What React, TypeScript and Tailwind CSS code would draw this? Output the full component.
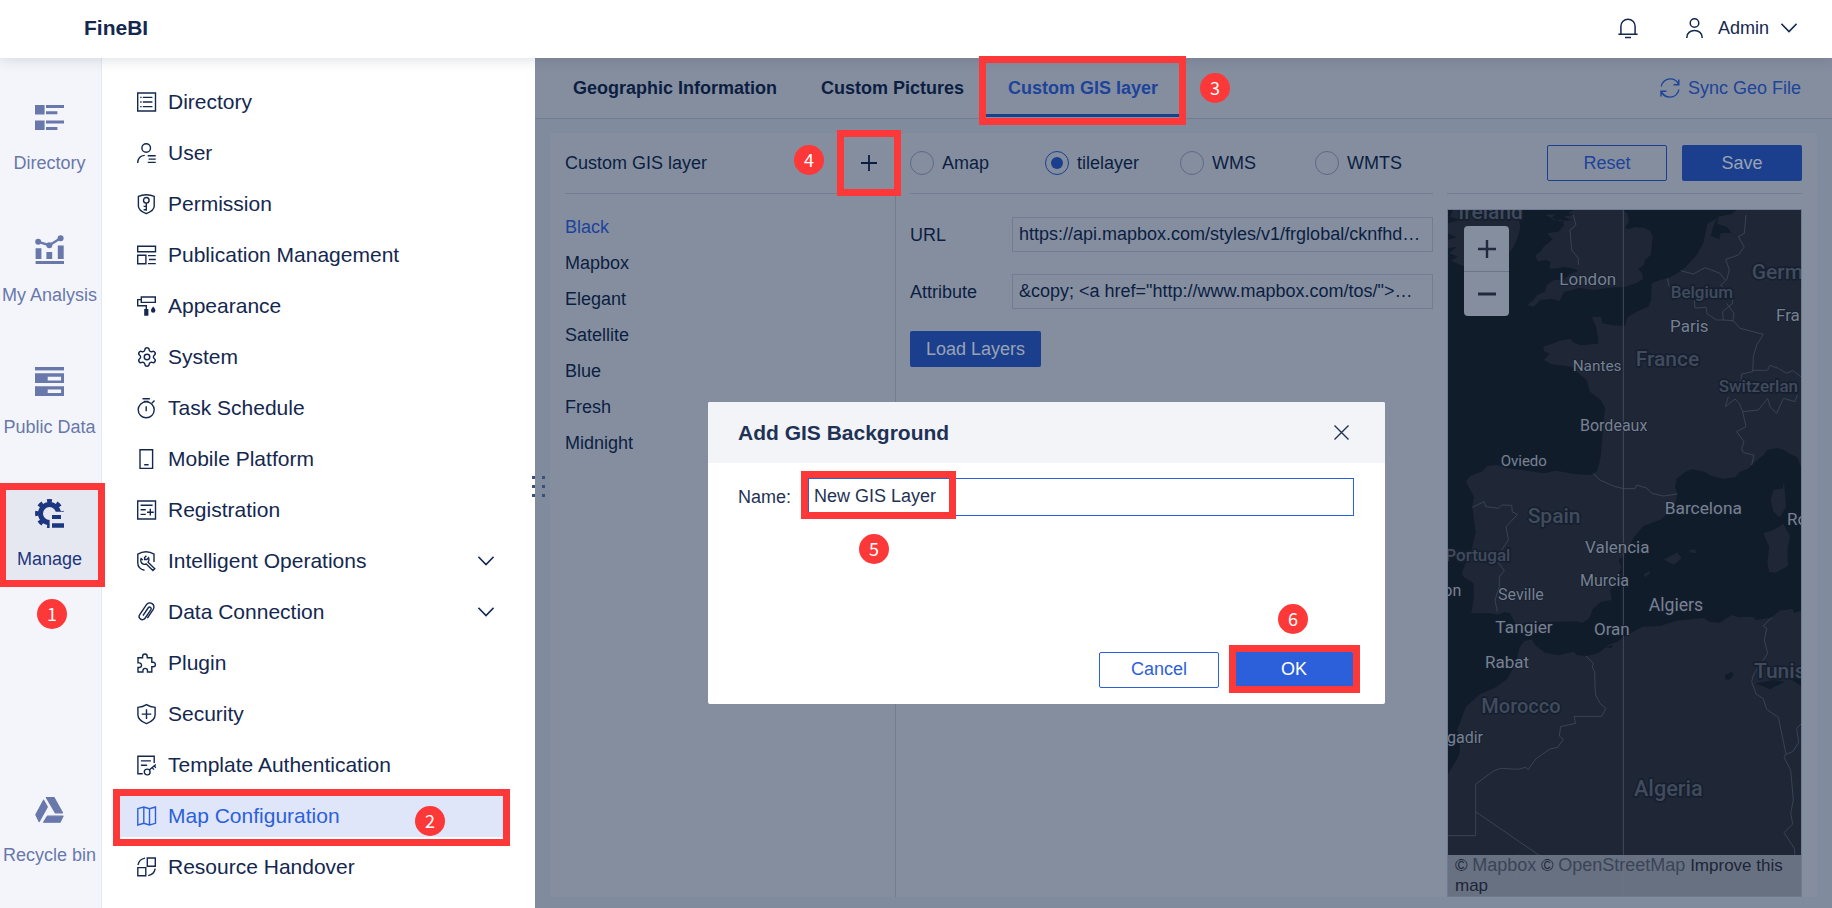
import { useState } from "react";
import type { ReactNode } from "react";
import { Settings } from "lucide-react";
import clsx from "clsx";

type IconProps = { children: ReactNode; className?: string };

const LineIcon = ({ children, className }: IconProps) => (
  <svg
    viewBox="0 0 20 20"
    fill="none"
    stroke="currentColor"
    strokeWidth="1.4"
    className={clsx("h-5 w-5 shrink-0 overflow-visible", className)}
    aria-hidden="true"
  >
    {children}
  </svg>
);

const SolidIcon = ({ children }: IconProps) => (
  <svg viewBox="0 0 30 30" fill="currentColor" className="h-7.5 w-7.5" aria-hidden="true">
    {children}
  </svg>
);

const ChevronDown = () => (
  <svg viewBox="0 0 16 16" className="h-4 w-4" fill="none" stroke="currentColor" strokeWidth="1.6" aria-hidden="true">
    <path d="M.4 3.8 8 11.6l7.6-7.8" />
  </svg>
);

const navItems: { title: string; icon: ReactNode }[] = [
  {
    title: "Directory",
    icon: (
      <SolidIcon>
        <path d="M0 2h9.6v9.4H0zM0 17.6h9.6V27H0zM11 2h18v3H11zM11 8.3h11.4v3H11zM11 17.6h18v3H11zM11 24h11.4v3H11z" />
      </SolidIcon>
    ),
  },
  {
    title: "My Analysis",
    icon: (
      <SolidIcon>
        <path d="M.6 13.3h5.8V24H.6zM11.4 17h5.8v7h-5.8zM22.8 10.6h5.9V24h-5.9zM.6 26H29v3H.6z" />
        <circle cx="3.2" cy="6.8" r="3" />
        <circle cx="14.3" cy="10.2" r="3" />
        <circle cx="25.6" cy="3.2" r="3" />
        <path d="m3.2 6.8 11.1 3.4 11.3-7" fill="none" stroke="currentColor" strokeWidth="2.4" />
      </SolidIcon>
    ),
  },
  {
    title: "Public Data",
    icon: (
      <SolidIcon>
        <path d="M0 0h29v3.4H0z" />
        <path
          fillRule="evenodd"
          d="M0 6.3h29V16H0zM12.7 9.8v3.6h13.4V9.8zM0 19.2h29V29H0zM12.7 22.4V26h13.4v-3.6z"
        />
      </SolidIcon>
    ),
  },
  {
    title: "Manage",
    icon: (
      <SolidIcon>
        <clipPath id="gear-cut">
          <path d="M0 0h30v12.8H14.6V30H0z" />
        </clipPath>
        <g clipPath="url(#gear-cut)" fill="none" stroke="currentColor">
          <circle cx="14.5" cy="14.5" r="9" strokeWidth="5" />
          <circle
            cx="14.5"
            cy="14.5"
            r="12.6"
            strokeWidth="3.6"
            pathLength="80"
            strokeDasharray="5 5"
            strokeDashoffset="2.5"
          />
        </g>
        <path d="M17 16h9v4h-9zM17 24.2h12v4.6H17z" />
      </SolidIcon>
    ),
  },
];

const menuItems: { title: string; icon: ReactNode; hasChildren?: boolean }[] = [
  {
    title: "Directory",
    icon: (
      <LineIcon>
        <path d="M.7 1h17.8v18H.7zM3.2 5.4h1.4M5.8 5.4h9.6M3.2 10h1.4M5.8 10h9.6M3.2 14.6h1.4M5.8 14.6h9.6" />
      </LineIcon>
    ),
  },
  {
    title: "User",
    icon: (
      <LineIcon>
        <circle cx="9.2" cy="5" r="4.3" />
        <path d="M.7 20c.2-4.5 2.8-7.4 7-7.6M10.7 12.7h8M11.6 16.1h7.1M10.7 19.4h8" />
      </LineIcon>
    ),
  },
  {
    title: "Permission",
    icon: (
      <LineIcon>
        <path d="M9.3.7c2.7 0 5.3.4 7.9 1.7v9.8c0 3-3.200 5.500-7.900 7.500-4.700-2-7.900-4.500-7.900-7.500V2.400C4 1.100 6.600.7 9.300.7Z" />
        <circle cx="9.3" cy="6.3" r="2.8" />
        <path d="M9.3 9.1v7.6M9.3 12.4H6.6M9.3 15.8H6.6" />
      </LineIcon>
    ),
  },
  {
    title: "Publication Management",
    icon: (
      <LineIcon>
        <path d="M.7 1.2h17.8v5.500H.7zM.7 10.200h8.200v8.600H.7zM11 10.600h7.800M12 14.500h6.800M11 18.600h7.800" />
      </LineIcon>
    ),
  },
  {
    title: "Appearance",
    icon: (
      <LineIcon>
        <path d="M4.3 1h14v5.4h-14zM4.3 3.600H.7v6.200h8.600V13" />
        <path
          d="M7.2 13h4.2v6.8H7.2zM16.2 10.600c1.500 1.900 2.200 3 2.200 3.900a2.200 2.200 0 0 1-4.400 0c0-.9.7-2 2.200-3.900Z"
          fill="currentColor"
          stroke="none"
        />
      </LineIcon>
    ),
  },
  { title: "System", icon: <Settings className="-mx-px h-5.5 w-5.5 shrink-0" strokeWidth={1.6} /> },
  {
    title: "Task Schedule",
    icon: (
      <LineIcon>
        <circle cx="9.2" cy="11.8" r="8" />
        <path d="M5.5.8h7.4M6.8 3.4h4.8M9.2 8.3v4.900M14.800 5.200l2.700-2.600" />
      </LineIcon>
    ),
  },
  {
    title: "Mobile Platform",
    icon: (
      <LineIcon>
        <path d="M3 .7h12.6v18.7H3zM7.2 15.8h4.4" />
      </LineIcon>
    ),
  },
  {
    title: "Registration",
    icon: (
      <LineIcon>
        <path d="M.7 1h17.8v18H.7zM3.6 5.3h12M3.6 9.8h5.2M3.6 14.4h5.2M10 12.2h6.8M13.3 8.8v6.8" />
      </LineIcon>
    ),
  },
  {
    title: "Intelligent Operations",
    hasChildren: true,
    icon: (
      <LineIcon>
        <path d="M7.5 19.300C3.200 18.300.8 15.500.8 12V3.200C3.300 1.600 6.100.7 9 .7s5.600.9 8 2.500V11" />
        <path d="M9.4 4.700 7.600 6.500v2h2.200l1.800-1.700c.9 2 .3 3.600-.5 4.500l6.700 6.400-1.900 1.900-6.600-6.600c-2.200.7-4.500.1-5.300-2.200-.4-1.300-.3-2.300.1-3.200l1.600 1.500" />
      </LineIcon>
    ),
  },
  {
    title: "Data Connection",
    hasChildren: true,
    icon: (
      <LineIcon>
        <path
          transform="rotate(34 9.5 10)"
          d="M13.6 14.500V4a4.100 4.100 0 0 0-8.200 0v12a3.200 3.200 0 0 0 6.400 0V5.500a1.500 1.500 0 0 0-3.200 0V15"
        />
      </LineIcon>
    ),
  },
  {
    title: "Plugin",
    icon: (
      <LineIcon>
        <path d="M1 4.700h4.600V3.300a2.300 2.300 0 0 1 4.600 0v1.400h4.600v4.600h1.400a2.200 2.200 0 0 1 0 4.400h-1.400V19h-4.300v-1.300a2.300 2.300 0 0 0-4.600 0V19H1v-4.500h1.200a2.300 2.300 0 0 0 0-4.600H1Z" />
      </LineIcon>
    ),
  },
  {
    title: "Security",
    icon: (
      <LineIcon>
        <path d="M9.5.6c2.600 1.700 5.400 2.500 8.600 2.800v7.400c0 4.300-3.400 7-8.600 8.900C4.300 17.800.9 15.100.9 10.800V3.400c3.200-.3 6-1.100 8.600-2.800ZM4.700 10.100h9.600M9.500 5.300v9.600" />
      </LineIcon>
    ),
  },
  {
    title: "Template Authentication",
    icon: (
      <LineIcon>
        <path d="M17.2 8V1.200H.9v17.600h4.800M3.900 5.900h10M3.900 10.300h6.200" />
        <circle cx="10.2" cy="17" r="2.9" />
        <path d="m12.2 15 6.600-5.500M15.200 12.600l1.700 2M17.300 10.900l1.500 1.800" />
      </LineIcon>
    ),
  },
  {
    title: "Map Configuration",
    icon: (
      <LineIcon>
        <path d="m.8 2.700 6-1.700 5.700 1.700 6-1.700v16.300l-6 1.700-5.700-1.700-6 1.700ZM6.800 1v16.300M12.500 2.700V19" />
      </LineIcon>
    ),
  },
  {
    title: "Resource Handover",
    icon: (
      <LineIcon>
        <path d="M10.3 1h8v8.200h-8zM.8 10.600h8v8.200h-8zM1 8c.6-3.400 3-6.200 7-6.900M18.200 11.700c-.6 3.400-3 6.200-7 6.900" />
      </LineIcon>
    ),
  },
];

const tabs = ["Geographic Information", "Custom Pictures", "Custom GIS layer"];
const layers = ["Black", "Mapbox", "Elegant", "Satellite", "Blue", "Fresh", "Midnight"];
const sources = ["Amap", "tilelayer", "WMS", "WMTS"];

// Red frame drawn round the control of one step
const Frame = ({ className }: { className: string }) => (
  <span className={clsx("pointer-events-none absolute z-20 border-[7px] border-[#fc3838]", className)} />
);

const Step = ({ n, className }: { n: number; className: string }) => (
  <span
    className={clsx(
      "pointer-events-none absolute z-20 flex h-[30px] w-[30px] items-center justify-center rounded-full bg-[#fc3838] pb-[2px] font-['Noto_Sans_CJK_SC','Noto_Sans',sans-serif] text-[18px] leading-7 font-normal text-white",
      className
    )}
  >
    {n}
  </span>
);

export default function App() {
  const [activeTab, setActiveTab] = useState("Custom GIS layer");
  const [activeLayer, setActiveLayer] = useState("Black");
  const [source, setSource] = useState("tilelayer");
  const [dialogOpen, setDialogOpen] = useState<boolean>(true);

  return (
    <div className="flex h-screen flex-col overflow-hidden bg-white font-['Liberation_Sans',Arial,sans-serif] text-[18px] leading-6 text-[#14284f]">
      <Header />
      <div className="flex min-h-0 flex-1">
        <SideNav />
        <ManageMenu />

        <main className="relative flex min-w-0 flex-1 flex-col bg-[#808b9e] text-[#0b1e42]">
          {/* Tabs */}
          <div className="flex h-[61px] shrink-0 justify-between border-b border-[#717d92] bg-[#858e9f] pr-[31px] pl-4">
            <div className="flex pb-px">
              {tabs.map((tab) => (
                <button
                  key={tab}
                  onClick={() => setActiveTab(tab)}
                  className={clsx(
                    "relative border-b-3 px-[22px] pt-1 font-bold",
                    tab === activeTab ? "border-[#1b3f8d] text-[#1d439a]" : "border-transparent"
                  )}
                >
                  {tab}
                  {tab === "Custom GIS layer" && (
                    <>
                      <Frame className="-top-[2px] -right-[6px] -bottom-[11px] -left-[7px]" />
                      <Step n={3} className="top-[15px] -right-[50px]" />
                    </>
                  )}
                </button>
              ))}
            </div>
            <button className="flex items-center gap-2 text-[#1d439a]">
              <LineIcon>
                <path d="M1.2 8.300C2.100 4 5.800.9 10.100.9c3.800 0 7.100 2.200 8.500 5.500M18.800 1.500v5.300h-5.300M18.900 11.700c-.9 4.300-4.500 7.400-8.900 7.400-3.800 0-7.100-2.200-8.600-5.500M1 18.500v-5.300h5.400" />
              </LineIcon>
              Sync Geo File
            </button>
          </div>

          <div className="flex min-h-0 flex-1 pt-[14px] pr-[15px] pb-[11px] pl-[15px]">
            <div className="flex min-w-0 flex-1 gap-[14px] bg-[#858e9f] px-[15px]">
              {/* Layer list */}
              <section className="flex w-[331px] shrink-0 flex-col">
                <div className="flex h-[61px] shrink-0 items-center justify-between border-b border-[#717d92] pr-[15px]">
                  <h2>Custom GIS layer</h2>
                  <button
                    aria-label="Add layer"
                    onClick={() => setDialogOpen(true)}
                    className="relative flex h-6 w-6 items-center justify-center"
                  >
                    <svg viewBox="0 0 16 16" className="h-4 w-4" stroke="currentColor" strokeWidth="1.8" aria-hidden="true">
                      <path d="M8 0v16M0 8h16" />
                    </svg>
                    <Frame className="-inset-x-5 -inset-y-[21px]" />
                    <Step n={4} className="-top-[6px] right-[57px]" />
                  </button>
                </div>
                <ul className="flex-1 border-r border-[#717d92] pt-[15px]">
                  {layers.map((layer) => (
                    <li key={layer}>
                      <button
                        onClick={() => setActiveLayer(layer)}
                        className={clsx("block h-9 w-full text-left", layer === activeLayer && "text-[#1d439a]")}
                      >
                        {layer}
                      </button>
                    </li>
                  ))}
                </ul>
              </section>

              {/* Layer source */}
              <section className="flex min-w-0 flex-1 flex-col">
                <div className="flex h-[61px] shrink-0 items-center border-b border-[#717d92]">
                  {sources.map((item) => (
                    <label key={item} className="flex w-[135px] shrink-0 items-center gap-2 last:w-auto">
                      <input
                        type="radio"
                        name="source"
                        checked={item === source}
                        onChange={() => setSource(item)}
                        className="h-6 w-6 shrink-0 appearance-none rounded-full border border-[#5b6a85] bg-clip-content p-[5px] checked:border-[#1b3f8d] checked:bg-[#1b3f8d]"
                      />
                      {item}
                    </label>
                  ))}
                </div>
                <div className="flex flex-col gap-[22px] pt-[23px]">
                  <Field id="url" label="URL" value="https://api.mapbox.com/styles/v1/frglobal/cknfhd…" />
                  <Field id="attribute" label="Attribute" value={'&copy; <a href="http://www.mapbox.com/tos/">…'} />
                  <button className="h-9 self-start rounded-xs bg-[#1b3f8d] px-4 text-[#99a3b6]">Load Layers</button>
                </div>
              </section>

              {/* Preview */}
              <section className="flex w-[355px] shrink-0 flex-col">
                <div className="flex h-[61px] shrink-0 items-center justify-end gap-[15px] border-b border-[#717d92]">
                  <button className="h-9 w-[120px] rounded-xs border border-[#1b3f8d] text-[#1d439a]">Reset</button>
                  <button className="h-9 w-[120px] rounded-xs bg-[#1b3f8d] text-[#99a3b6]">Save</button>
                </div>
                <MapPreview />
              </section>
            </div>
          </div>

          {/* Resize handle */}
          <div className="absolute top-[418px] -left-[3px] z-10 flex gap-[7px]">
            <Dots />
            <Dots />
          </div>

          {dialogOpen && <AddDialog onClose={() => setDialogOpen(false)} />}
        </main>
      </div>
    </div>
  );
}

const Header = () => (
  <header className="relative z-10 flex h-[58px] shrink-0 items-center justify-between bg-white pr-[35px] pb-[2px] pl-[84px] shadow-[0_2px_12px_rgba(20,40,79,0.14)]">
    <h1 className="text-[21px] font-bold">FineBI</h1>
    <div className="flex items-center">
      <button aria-label="Notifications" className="mr-[47px]">
        <LineIcon>
          <path d="M2.9 16.200V8.300a7.100 7.100 0 0 1 14.200 0v7.900M.4 16.300h19.200M7 19.400h6" strokeWidth="1.5" />
        </LineIcon>
      </button>
      <button className="flex items-center">
        <LineIcon className="mr-[13px]">
          <circle cx="9.5" cy="5" r="4.3" strokeWidth="1.5" />
          <path d="M1.8 20v-.6c0-4.200 3.400-6.900 7.700-6.900s7.700 2.700 7.700 6.900v.6" strokeWidth="1.5" />
        </LineIcon>
        <span className="mr-3">Admin</span>
        <ChevronDown />
      </button>
    </div>
  </header>
);

const SideNav = () => (
  <nav className="flex w-[102px] shrink-0 flex-col gap-7 border-r border-[#e6e8f0] bg-[#f4f5fa] pt-[29px] pr-[2px] pb-[25px] text-[#6878ab]">
    {navItems.map((item) => (
      <a
        key={item.title}
        href="#"
        className={clsx(
          "relative flex h-[104px] shrink-0 flex-col items-center gap-[18px] pt-4 whitespace-nowrap",
          item.title === "Manage" && "bg-[#e6e8f1] text-[#1c3680]"
        )}
      >
        {item.icon}
        {item.title}
        {item.title === "Manage" && (
          <>
            <Frame className="inset-y-0 -right-[6px] -left-px" />
            <Step n={1} className="top-[116px] left-[37px]" />
          </>
        )}
      </a>
    ))}
    <a href="#" className="mt-auto flex h-[104px] shrink-0 flex-col items-center gap-[18px] pt-4 whitespace-nowrap">
      <SolidIcon>
        <g stroke="currentColor" strokeWidth="1.2" strokeLinejoin="round">
          <path d="M11.4 2.600H19l8.500 15.200h-7.200ZM8.600 5.200.8 19.800l3.300 6.800 8.200-14.700ZM12.300 21.200H28l-3 6H8.600Z" />
        </g>
      </SolidIcon>
      Recycle bin
    </a>
  </nav>
);

const ManageMenu = () => (
  <aside className="w-[433px] shrink-0 overflow-hidden bg-white px-[18px] pt-[18px] text-[21px]">
    <ul>
      {menuItems.map((item) => {
        const active = item.title === "Map Configuration";
        return (
          <li key={item.title}>
            <a
              href="#"
              className={clsx(
                "relative flex h-[51px] items-center gap-[11px] pr-[23px] pl-[17px]",
                active && "text-[#2c60db]"
              )}
            >
              {active && <span className="absolute inset-y-1 right-3 left-0 bg-[#e0e6fa]" />}
              <span className="relative flex">{item.icon}</span>
              <span className="relative flex-1">{item.title}</span>
              {item.hasChildren && <ChevronDown />}
              {active && (
                <>
                  <Frame className="-top-px right-[7px] -bottom-[5px] -left-[7px]" />
                  <Step n={2} className="top-4 right-[72px]" />
                </>
              )}
            </a>
          </li>
        );
      })}
    </ul>
  </aside>
);

const Dots = () => (
  <div className="flex flex-col gap-[6px]">
    <i className="h-[3px] w-[3px] bg-[#3a4f7b]" />
    <i className="h-[3px] w-[3px] bg-[#3a4f7b]" />
    <i className="h-[3px] w-[3px] bg-[#3a4f7b]" />
  </div>
);

const Field = ({ id, label, value }: { id: string; label: string; value: string }) => (
  <div className="flex items-center">
    <label htmlFor={id} className="w-[102px] shrink-0">
      {label}
    </label>
    <input
      id={id}
      defaultValue={value}
      className="h-[35px] min-w-0 flex-1 border border-[#717d92] bg-transparent px-[6px] text-ellipsis outline-none"
    />
  </div>
);

const AddDialog = ({ onClose }: { onClose: () => void }) => (
  <div
    role="dialog"
    aria-labelledby="dialog-title"
    className="absolute top-[344px] left-[173px] flex h-[302px] w-[677px] flex-col rounded-xs bg-white text-[#1f3255]"
  >
    <div className="flex h-[61px] shrink-0 items-center justify-between rounded-t-xs bg-[#f2f4f8] pr-[31px] pl-[30px]">
      <h2 id="dialog-title" className="text-[21px] font-bold">
        Add GIS Background
      </h2>
      <button aria-label="Close" onClick={onClose} className="p-[5px]">
        <svg viewBox="0 0 15 15" className="h-[15px] w-[15px]" stroke="currentColor" strokeWidth="1.4" aria-hidden="true">
          <path d="m.5.5 14 14M14.5.5l-14 14" />
        </svg>
      </button>
    </div>
    <div className="flex items-center pt-[15px] pr-[31px] pl-[30px]">
      <label htmlFor="layer-name" className="w-[70px] shrink-0">
        Name:
      </label>
      <div className="relative flex-1">
        <input
          id="layer-name"
          defaultValue="New GIS Layer"
          className="block h-[38px] w-full border border-[#2c60db] px-[5px] pb-[2px] outline-none"
        />
        <Frame className="-top-[7px] -left-[7px] h-12 w-[155px]" />
        <Step n={5} className="top-14 left-[51px]" />
      </div>
    </div>
    <div className="mt-auto flex justify-end gap-[15px] pr-[31px] pb-4">
      <button onClick={onClose} className="h-9 w-[120px] rounded-xs border border-[#2c60db] pb-[2px] text-[#2c60db]">
        Cancel
      </button>
      <button onClick={onClose} className="relative h-9 w-[120px] rounded-xs bg-[#2c60db] pb-[2px] text-white">
        OK
        <Frame className="-top-[7px] -right-[6px] -bottom-[5px] -left-[5px]" />
        <Step n={6} className="-top-[48px] left-11" />
      </button>
    </div>
  </div>
);

// [text, x, baseline, size]
type MapLabel = [string, number, number, number];

const countries: MapLabel[] = [
  ["Ireland", 85, 57, 63],
  ["Belgium", 722, 293, 51],
  ["Germ", 965, 238, 63],
  ["France", 617, 498, 63],
  ["Switzerlan", 866, 575, 51],
  ["Spain", 293, 968, 63],
  ["Portugal", 46, 1083, 51],
  ["Tunis", 972, 1433, 63],
  ["Morocco", 154, 1540, 60],
  ["Algeria", 612, 1789, 65],
];

const cities: MapLabel[] = [
  ["London", 388, 254, 51],
  ["Paris", 720, 396, 51],
  ["Fra", 1038, 364, 51],
  ["Nantes", 428, 514, 46],
  ["Bordeaux", 450, 692, 48],
  ["Oviedo", 212, 797, 45],
  ["Barcelona", 704, 942, 52],
  ["Ro", 1071, 974, 51],
  ["Valencia", 465, 1060, 51],
  ["on", 40, 1187, 48],
  ["Murcia", 450, 1159, 48],
  ["Seville", 204, 1199, 48],
  ["Algiers", 656, 1233, 53],
  ["Tangier", 196, 1298, 52],
  ["Oran", 492, 1304, 51],
  ["Rabat", 165, 1405, 51],
  ["gadir", 51, 1629, 48],
];

const MapPreview = () => (
  <div className="relative mt-[15px] min-h-0 flex-1 overflow-hidden border border-[#6f7b90] bg-[#111c2b]">
    <svg
      viewBox="54 30 1059 2058"
      preserveAspectRatio="xMinYMin slice"
      className="absolute inset-0 h-full w-full"
      role="img"
      aria-label="Map preview"
    >
      <g fill="#1f2737">
        <path d="M70 30H275L268 62 271 80 262 115 250 142 235 160 160 178 100 198 62 182 84 170 58 160 80 140 54 145V120L80 112 54 100V70L90 60 60 50Z" />
        <path d="M345 45 375 42 362 58 398 60 402 76 385 95 352 100 368 118 340 142 332 155 315 167 325 184 350 180 362 187 358 206 385 205 400 200 432 206 445 212 420 222 400 240 372 240 350 255 345 275 322 285 308 302 292 315 310 321 330 300 365 296 388 303 402 276 450 264 490 270 550 262 580 262 618 250 640 236 636 220 625 208 640 196 645 180 662 165 668 110 660 92 640 83 615 82 596 88 585 84 597 62 592 42 580 30H432L415 38 430 45 400 50 425 60 390 64Z" />
        <path d="M340 440 372 430 390 422 420 417 435 430 452 436 505 431 503 405 498 378 485 350 512 350 518 370 545 376 585 378 592 352 620 335 655 320 664 298 665 250 690 240 715 235 755 212 770 198 800 165 820 130 828 92 832 72 862 54 850 78 842 108 868 118 872 100 905 98 890 80 862 72 865 50 905 42 920 30H1113V800L1102 772 1080 762 1062 750 1040 744 1012 750 1000 766 975 785 955 806 930 815 915 832 880 836 845 828 820 814 785 808 765 816 740 836 735 862 742 882 738 905 720 930 695 958 640 978 615 1008 603 1025 592 1055 566 1080 575 1100 552 1150 540 1170 545 1200 512 1206 488 1228 478 1255 458 1268 435 1264 340 1266 285 1268 262 1280 240 1240 225 1236 205 1244 182 1240 155 1240 124 1240 132 1190 130 1150 100 1130 96 1120 108 1085 125 1050 137 995 130 945 127 920 132 890 108 845 120 828 155 815 172 797 200 795 240 806 290 812 340 820 380 812 430 822 486 826 502 812 512 770 518 700 522 650 526 625 512 600 480 575 470 540 450 524 425 500 362 492 342 480 358 462 342 452Z" />
        <path d="M1030 870 1058 866 1062 848 1066 890 1068 920 1050 952 1030 935 1022 900ZM1000 1000 1030 990 1060 972 1080 1008 1072 1050 1074 1098 1055 1108 1038 1118 1018 1116 1012 1090 1018 1040ZM702 1078 742 1058 755 1074 732 1094 715 1086ZM640 1125 658 1112 660 1120 646 1132ZM775 1052 795 1048 798 1058 785 1058Z" />
        <path d="M54 2088V1722L82 1676 90 1655 88 1615 82 1590 104 1530 108 1520 148 1484 200 1460 232 1436 258 1390 268 1345 282 1324 305 1318 316 1336 345 1358 385 1366 432 1355 440 1366 470 1368 505 1360 535 1335 560 1326 585 1308 638 1280 690 1278 740 1262 820 1254 840 1266 870 1268 905 1245 925 1252 968 1250 978 1260 1022 1254 1050 1232 1088 1226 1092 1240 1113 1232V2088Z" />
      </g>
      <g fill="#111c2b">
        <path d="M885 1425 905 1415 912 1425 898 1440 885 1438ZM978 1450 1030 1440 1065 1445 1020 1468ZM1080 1436 1113 1430V1458ZM525 1342 550 1334 545 1344Z" />
      </g>
      <g fill="none" stroke="#394354" strokeWidth="3" strokeLinejoin="round">
        <path d="M488 820 510 840 550 858 580 866 615 866 620 855 650 864 665 880 700 888 742 882" />
        <path d="M127 922 162 905 168 920 205 925 215 915 245 916 247 936 263 943 228 980 235 1020 215 1050 205 1088 223 1112 208 1130 208 1160 195 1200 202 1235" />
        <path d="M948 45 943 100 925 110 943 140 925 165 887 178 898 210 890 240 872 255 905 290 908 310 878 335 880 360 910 362 930 385 1000 403 980 435 970 470 968 515 935 522 932 550" />
        <path d="M712 235 718 260M752 212 790 222 825 203 870 220 885 240M793 300 795 324 828 322 832 342 860 360 880 360M890 310 912 340 908 365" />
        <path d="M968 511H1012L1020 496 1045 505 1070 520 1088 512 1113 530M895 590 886 620 915 597 928 610 938 635 985 630 1013 595 1020 620 1040 640 1060 595 1095 605 1102 585" />
        <path d="M938 635 948 680 920 695 942 725 935 745 940 758 972 765 965 795M430 45 438 75 420 90 425 150 445 175V195" />
        <path d="M468 1368 490 1390 487 1402 494 1415 495 1460 497 1485 510 1510 528 1525 515 1549H432L437 1570 392 1580 388 1608 400 1618 383 1642 360 1647 318 1676 295 1708 285 1702 265 1708 212 1705 192 1712 137 1752V1907H54M137 1835 505 2088M255 1966H335M255 1966 265 2088" />
        <path d="M1025 1253 1000 1278 1010 1285 1003 1320 1013 1360 1000 1380 970 1425 965 1445 978 1482 1000 1496 1010 1528 1045 1552 1068 1662 1062 1672 1082 1710 1090 1800 1082 1840 1088 1872 1062 1898 1093 1945 1095 1970 1113 1995M1068 1663 1088 1655 1106 1628 1100 1585 1113 1572" />
      </g>
      <path d="M580 30V2088" stroke="#414b5c" strokeWidth="3" />
      <g
        fontFamily="Roboto, sans-serif"
        stroke="#151f2f"
        strokeWidth="10"
        strokeLinejoin="round"
        style={{ paintOrder: "stroke" }}
      >
        {countries.map(([text, x, y, size]) => (
          <text key={text} x={x} y={y} fontSize={size} fontWeight="500" fill="#414b5c">
            {text}
          </text>
        ))}
        {cities.map(([text, x, y, size]) => (
          <text key={text} x={x} y={y} fontSize={size} fill="#788191" strokeWidth="5">
            {text}
          </text>
        ))}
      </g>
    </svg>

    <div className="absolute top-4 left-4 flex w-[45px] flex-col rounded-sm bg-[#858e9f] text-[#1f2a3e]">
      <button aria-label="Zoom in" className="flex h-[46px] items-center justify-center border-b border-[#6b7588]">
        <svg viewBox="0 0 18 18" className="h-[18px] w-[18px]" stroke="currentColor" strokeWidth="2.4" aria-hidden="true">
          <path d="M9 0v18M0 9h18" />
        </svg>
      </button>
      <button aria-label="Zoom out" className="flex h-11 items-center justify-center">
        <svg viewBox="0 0 18 18" className="h-[18px] w-[18px]" stroke="currentColor" strokeWidth="3" aria-hidden="true">
          <path d="M0 9h18" />
        </svg>
      </button>
    </div>

    <p className="absolute inset-x-0 bottom-0 bg-[#6d7586]/95 pr-1 pl-[7px] text-[17px] leading-5 text-[#1c2537]">
      ©{" "}
      <a href="#" className="text-[18px] text-[#3a4456]">
        Mapbox
      </a>{" "}
      ©{" "}
      <a href="#" className="text-[18px] text-[#3a4456]">
        OpenStreetMap
      </a>{" "}
      <a href="#">Improve this map</a>
    </p>
  </div>
);
